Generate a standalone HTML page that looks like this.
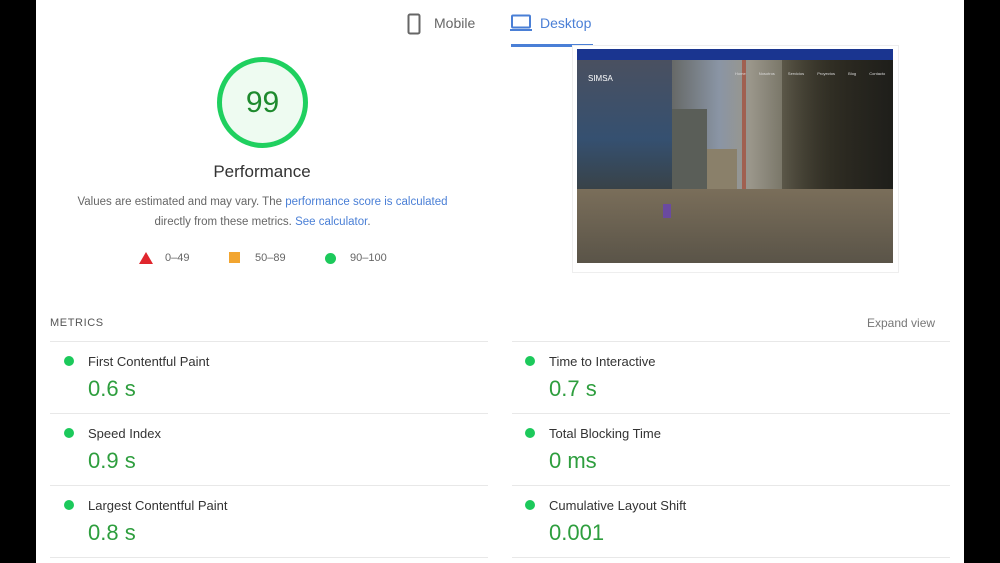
<!DOCTYPE html>
<html><head><meta charset="utf-8"><style>
*{margin:0;padding:0;box-sizing:border-box}
body{width:1000px;height:563px;background:#000;position:relative;overflow:hidden;font-family:"Liberation Sans",Arial,sans-serif}
#pg{position:absolute;left:36px;top:0;width:928px;height:563px;background:#fff}
.a{position:absolute}
.t{color:#555;font-size:13px}
.lbl{position:absolute;font-size:13px;color:#333}
.val{position:absolute;font-size:22px;color:#2e9e3e}
.dot{position:absolute;width:10px;height:10px;border-radius:50%;background:#1cc95b}
.hr{position:absolute;height:1px;background:#e8e8e8}
</style></head><body>
<div id="pg"></div>
<!-- tabs -->
<svg class="a" style="left:407px;top:13px" width="14" height="22"><rect x="1.5" y="1.5" width="11" height="19" rx="1.5" fill="none" stroke="#666" stroke-width="2"/></svg>
<div class="a" style="left:434px;top:15px;font-size:14px;color:#666">Mobile</div>
<svg class="a" style="left:510px;top:14px" width="22" height="18"><rect x="2" y="1.5" width="18" height="12" rx="1" fill="none" stroke="#4a7fd6" stroke-width="2"/><rect x="0" y="15" width="22" height="2" fill="#4a7fd6"/></svg>
<div class="a" style="left:540px;top:15px;font-size:14px;color:#4a7fd6">Desktop</div>
<div class="a" style="left:511px;top:44px;width:82px;height:3px;background:#4a7fd6"></div>
<!-- gauge -->
<div class="a" style="left:217px;top:57px;width:91px;height:91px;border-radius:50%;border:5px solid #1fd05f;background:#eefbf1"></div>
<div class="a" style="left:217px;top:86px;width:91px;text-align:center;font-size:30px;color:#1e8a2e">99</div>
<div class="a" style="left:162px;top:162px;width:200px;text-align:center;font-size:17px;color:#333">Performance</div>
<div class="a t" style="left:60px;top:192px;width:405px;text-align:center;font-size:11.5px;line-height:20px;color:#666">Values are estimated and may vary. The <span style="color:#4a7fd6">performance score is calculated</span><br>directly from these metrics. <span style="color:#4a7fd6">See calculator</span>.</div>
<svg class="a" style="left:139px;top:252px" width="14" height="12"><polygon points="7,0 14,12 0,12" fill="#e0262d"/></svg>
<div class="a" style="left:165px;top:252px;font-size:11px;color:#666">0–49</div>
<div class="a" style="left:229px;top:252px;width:11px;height:11px;background:#f2a530"></div>
<div class="a" style="left:255px;top:252px;font-size:11px;color:#666">50–89</div>
<div class="dot" style="left:325px;top:253px;width:11px;height:11px"></div>
<div class="a" style="left:350px;top:252px;font-size:11px;color:#666">90–100</div>
<!-- screenshot -->
<div class="a" style="left:572px;top:45px;width:327px;height:228px;border:1px solid #eee;background:#fff"></div>
<div class="a" style="left:577px;top:49px;width:316px;height:214px;overflow:hidden;background:linear-gradient(90deg,#3a4250 0%,#5a5a52 25%,#8a95a5 45%,#9a968a 55%,#4a4838 80%,#2a2a25 100%)">
  <div class="a" style="left:0;top:10px;width:95px;height:160px;background:linear-gradient(180deg,#4a5060,#355070 50%,#3a3a30)"></div>
  <div class="a" style="left:95px;top:60px;width:35px;height:100px;background:#5a5e58"></div>
  <div class="a" style="left:130px;top:100px;width:30px;height:60px;background:#8a806a"></div>
  <div class="a" style="left:165px;top:10px;width:4px;height:140px;background:#a06050"></div>
  <div class="a" style="left:205px;top:10px;width:111px;height:160px;background:linear-gradient(90deg,rgba(60,55,40,.5),#2a2820 60%,#1e1e1a)"></div>
  <div class="a" style="left:0;top:140px;width:316px;height:74px;background:linear-gradient(180deg,#7a6e5a,#5a5448)"></div>
  <div class="a" style="left:86px;top:155px;width:8px;height:14px;background:#6a4aa0"></div>
</div>
<div class="a" style="left:577px;top:49px;width:316px;height:11px;background:#1a3590"></div>
<div class="a" style="left:735px;top:71px;font-size:4px;color:#ddd;word-spacing:12px">Home Nosotros Servicios Proyectos Blog Contacto</div>
<div class="a" style="left:588px;top:74px;font-size:8px;color:#fff">SIMSA</div>
<!-- metrics -->
<div class="a" style="left:50px;top:317px;font-size:11px;letter-spacing:.6px;color:#555">METRICS</div>
<div class="a" style="left:867px;top:316px;font-size:12px;color:#777">Expand view</div>
<div class="hr" style="left:50px;top:341px;width:438px"></div>
<div class="hr" style="left:512px;top:341px;width:438px"></div>
<div class="hr" style="left:50px;top:413px;width:438px"></div>
<div class="hr" style="left:512px;top:413px;width:438px"></div>
<div class="hr" style="left:50px;top:485px;width:438px"></div>
<div class="hr" style="left:512px;top:485px;width:438px"></div>
<div class="hr" style="left:50px;top:557px;width:438px"></div>
<div class="hr" style="left:512px;top:557px;width:438px"></div>

<div class="dot" style="left:64px;top:356px"></div><div class="lbl" style="left:88px;top:354px">First Contentful Paint</div><div class="val" style="left:88px;top:376px">0.6 s</div>
<div class="dot" style="left:64px;top:428px"></div><div class="lbl" style="left:88px;top:426px">Speed Index</div><div class="val" style="left:88px;top:448px">0.9 s</div>
<div class="dot" style="left:64px;top:500px"></div><div class="lbl" style="left:88px;top:498px">Largest Contentful Paint</div><div class="val" style="left:88px;top:520px">0.8 s</div>
<div class="dot" style="left:525px;top:356px"></div><div class="lbl" style="left:549px;top:354px">Time to Interactive</div><div class="val" style="left:549px;top:376px">0.7 s</div>
<div class="dot" style="left:525px;top:428px"></div><div class="lbl" style="left:549px;top:426px">Total Blocking Time</div><div class="val" style="left:549px;top:448px">0 ms</div>
<div class="dot" style="left:525px;top:500px"></div><div class="lbl" style="left:549px;top:498px">Cumulative Layout Shift</div><div class="val" style="left:549px;top:520px">0.001</div>
</body></html>
